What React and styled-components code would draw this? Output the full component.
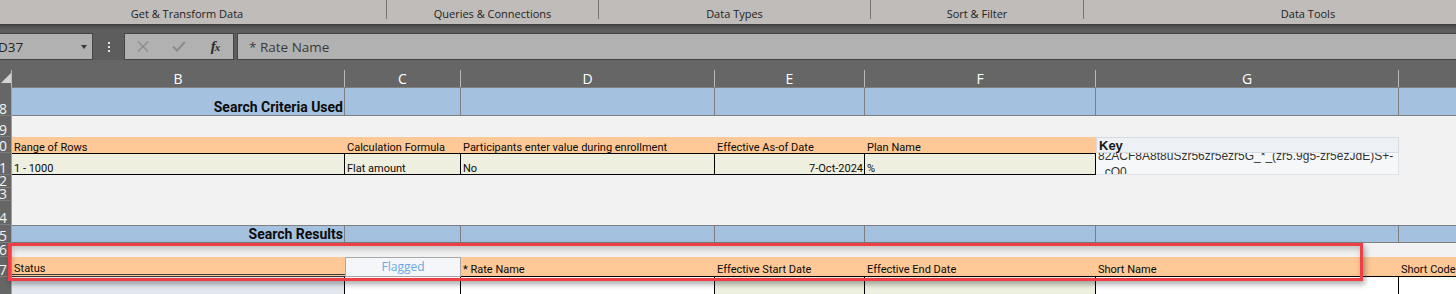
import React from 'react';
import styled, { createGlobalStyle } from 'styled-components';

const COLS = '12px 333px 116px 254px 150px 231px 303px 400px';
const UI = `"Open Sans", "Noto Sans", sans-serif`;
const CELL = `Roboto, "Liberation Sans", sans-serif`;
const ARIAL = `"Liberation Sans", Arial, sans-serif`;

const GlobalStyle = createGlobalStyle`
  html, body { margin: 0; padding: 0; background: #f2f2f2; overflow: hidden; }
  body { font-family: ${CELL}; }
  * { box-sizing: border-box; }
`;

const Window = styled.div`
  width: 1456px;
  height: 294px;
  overflow: hidden;
  display: flex;
  flex-direction: column;
`;

/* ---------- Ribbon ---------- */
const Ribbon = styled.div`
  flex: 0 0 24px;
  background: #c0bcb9;
  display: flex;
  align-items: flex-start;
  overflow: hidden;
`;
const RibbonGroup = styled.div`
  flex: 0 0 ${p => p.$w}px;
  height: 24px;
  padding: 6px ${p => p.$pr || 0}px 0 0;
  text-align: center;
  font: 11px/16px ${UI};
  color: #222;
  white-space: nowrap;
`;
const RibbonDivider = styled.div`
  flex: 0 0 1px;
  height: 19px;
  background: #77736f;
`;

/* ---------- Formula bar ---------- */
const FormulaArea = styled.div`
  flex: 0 0 auto;
  padding-top: 9px;
  background: linear-gradient(#3c3c3c, #535353 3px, #5d5d5d 6px);
`;
const FormulaBar = styled.div`
  height: 27px;
  display: flex;
`;
const NameBox = styled.div`
  flex: 0 0 93px;
  border: 1px solid #454545;
  border-left: none;
  background: #b1b1b1;
  display: flex;
  align-items: center;
  justify-content: space-between;
  padding-right: 5px;
  font: 13.5px ${UI};
  color: #262626;
`;
const NameText = styled.span`
  margin-left: -2px;
`;
const Caret = styled.span`
  width: 0;
  height: 0;
  border-left: 3px solid transparent;
  border-right: 3px solid transparent;
  border-top: 4px solid #383838;
`;
const DotsSlot = styled.div`
  flex: 0 0 31px;
  display: flex;
  flex-direction: column;
  align-items: center;
  justify-content: center;
  gap: 2px;
`;
const Dot = styled.span`
  width: 2px;
  height: 2px;
  background: #e2e2e2;
`;
const ButtonBox = styled.div`
  flex: 0 0 110px;
  border: 1px solid #454545;
  background: #b1b1b1;
  display: flex;
  align-items: center;
`;
const IconSlot = styled.div`
  flex: 0 0 36px;
  display: flex;
  align-items: center;
  justify-content: center;
`;
const Fx = styled.span`
  font: italic bold 15px "Liberation Serif", serif;
  color: #2b2b2b;
  letter-spacing: -1px;
  small { font-size: 11px; }
`;
const FormulaInput = styled.div`
  flex: 1;
  margin-left: 3px;
  border: 1px solid #454545;
  border-right: none;
  background: #b1b1b1;
  display: flex;
  align-items: center;
  padding-left: 11px;
  font: 13.5px ${UI};
  color: #3a3a3a;
`;

/* ---------- Column header ---------- */
const HeaderBlock = styled.div`
  flex: 0 0 auto;
  background: #666666;
  padding-top: 10px;
`;
const HeaderRow = styled.div`
  display: grid;
  grid-template-columns: ${COLS};
  height: 17px;
`;
const CornerCell = styled.div`
  border-right: 1px solid #b8b8b8;
  display: flex;
  align-items: flex-end;
  justify-content: flex-end;
  padding: 0 0 4px 0;
`;
const ColHead = styled.div`
  border-right: 1px solid #b8b8b8;
  color: #ffffff;
  font: 14px/17px ${UI};
  text-align: center;
  overflow: hidden;
`;

/* ---------- Sheet ---------- */
const Sheet = styled.div`
  flex: 1;
  position: relative;
  background: #f2f2f2;
`;
const Row = styled.div`
  display: grid;
  grid-template-columns: ${COLS};
  height: ${p => p.$h}px;
`;
const RowHead = styled.div`
  background: #666666;
  color: #f4f4f4;
  border-right: 1px solid #a0a0a0;
  border-bottom: 1px solid #7c7c7c;
  display: flex;
  justify-content: flex-end;
  align-items: flex-end;
  padding: 0 4px 1px 0;
  overflow: hidden;
  white-space: nowrap;
  font: 14px/11px ${UI};
`;
const Blank = styled.div``;

const BandCell = styled.div`
  background: #a4c2df;
  border-top: 1px solid #7f7f7f;
  border-bottom: 1px solid #7f7f7f;
  border-right: 1px solid #7f7f7f;
  display: flex;
  align-items: flex-end;
  justify-content: flex-end;
  padding: 0 1px 1px 0;
  font: bold 14px/14px ${CELL};
  color: #0c0c0c;
  white-space: nowrap;
`;

const LabelCell = styled.div`
  background: #fec996;
  display: flex;
  align-items: flex-end;
  padding: 0 2px ${p => (p.$ruled ? 1 : 0)}px 2px;
  border-bottom: ${p => (p.$double ? '3px double #3a3a3a' : p.$ruled ? '1px solid #000' : 'none')};
  font: 11px/11px ${CELL};
  color: #0a0a0a;
  white-space: nowrap;
  overflow: hidden;
`;

const ValueCell = styled.div`
  background: ${p => p.$bg};
  border-top: ${p => (p.$open ? 'none' : '1px solid #000')};
  border-bottom: ${p => (p.$open ? 'none' : '1px solid #000')};
  border-right: 1px solid #000;
  display: flex;
  align-items: flex-end;
  justify-content: ${p => (p.$right ? 'flex-end' : 'flex-start')};
  padding: 0 1px 0 2px;
  font: 11px/11px ${CELL};
  color: #0a0a0a;
  white-space: nowrap;
  overflow: hidden;
`;

const KeyHead = styled.div`
  background: #edf0f5;
  border: 1px solid #d6dbe3;
  display: flex;
  align-items: flex-end;
  padding-left: 2px;
  font: bold 13px/13px ${ARIAL};
  color: #151515;
`;
const KeyValue = styled.div`
  background: #f6f7f9;
  border-right: 1px solid #dfe3e8;
  border-bottom: 1px solid #dfe3e8;
  display: flex;
  flex-direction: column;
  justify-content: center;
  padding-left: 2px;
  overflow: hidden;
  font: 12px/16px ${ARIAL};
  color: #333;
  white-space: nowrap;
`;

const FlagCell = styled.div`
  background: #f4f6f9;
  border: 1px solid #a9a9a9;
  display: flex;
  align-items: center;
  justify-content: center;
  font: 12px/16px ${UI};
  color: #6aa8ea;
`;

const RedBox = styled.div`
  position: absolute;
  left: 8px;
  top: 156px;
  width: 1355px;
  height: 38px;
  border: 3px solid #ee3e46;
  box-shadow: 2px 3px 6px rgba(0, 0, 0, 0.35), inset 1px 3px 6px rgba(0, 0, 0, 0.22);
  pointer-events: none;
`;

const ribbonGroups = [
  { w: 386, pr: 12, label: 'Get & Transform Data' },
  { w: 211, label: 'Queries & Connections' },
  { w: 271, label: 'Data Types' },
  { w: 212, label: 'Sort & Filter' },
  { w: 448, label: 'Data Tools' },
];

const letters = ['B', 'C', 'D', 'E', 'F', 'G', ''];

const criteriaLabels = [
  'Range of Rows',
  'Calculation Formula',
  'Participants enter value during enrollment',
  'Effective As-of Date',
  'Plan Name',
];

const criteriaValues = [
  { t: '1 - 1000' },
  { t: 'Flat amount' },
  { t: 'No' },
  { t: '7-Oct-2024', right: true },
  { t: '%' },
];

const resultLabels = ['* Rate Name', 'Effective Start Date', 'Effective End Date', 'Short Name', 'Short Code'];

const lastRowBgs = ['#e3e8ef', '#ffffff', '#ffffff', '#edefdf', '#edefdf', '#ffffff', '#ffffff'];

function Band({ n, h, title }) {
  return (
    <Row $h={h}>
      <RowHead>{n}</RowHead>
      <BandCell>{title}</BandCell>
      {letters.slice(1).map((l, i) => (
        <BandCell key={i} />
      ))}
    </Row>
  );
}

function EmptyRow({ n, h }) {
  return (
    <Row $h={h}>
      <RowHead>{n}</RowHead>
    </Row>
  );
}

export default function App() {
  return (
    <Window>
      <GlobalStyle />
      <Ribbon>
        {ribbonGroups.map((g, i) => (
          <React.Fragment key={g.label}>
            <RibbonGroup $w={g.w} $pr={g.pr}>{g.label}</RibbonGroup>
            {i < ribbonGroups.length - 1 && <RibbonDivider />}
          </React.Fragment>
        ))}
      </Ribbon>

      <FormulaArea>
        <FormulaBar>
          <NameBox>
            <NameText>D37</NameText>
            <Caret />
          </NameBox>
          <DotsSlot>
            <Dot />
            <Dot />
            <Dot />
          </DotsSlot>
          <ButtonBox>
            <IconSlot>
              <svg width="12" height="11" viewBox="0 0 12 11">
                <path d="M1 0.5 L11 10.5 M11 0.5 L1 10.5" stroke="#8c8c8c" strokeWidth="1.4" fill="none" />
              </svg>
            </IconSlot>
            <IconSlot>
              <svg width="14" height="11" viewBox="0 0 14 11">
                <path d="M1 5.5 L5 9.5 L13 1" stroke="#8c8c8c" strokeWidth="2" fill="none" />
              </svg>
            </IconSlot>
            <IconSlot>
              <Fx>
                f<small>x</small>
              </Fx>
            </IconSlot>
          </ButtonBox>
          <FormulaInput>* Rate Name</FormulaInput>
        </FormulaBar>
      </FormulaArea>

      <HeaderBlock>
        <HeaderRow>
          <CornerCell>
            <svg width="10" height="10" viewBox="0 0 10 10">
              <path d="M10 0 L10 10 L0 10 Z" fill="#d4d4d4" />
            </svg>
          </CornerCell>
          {letters.map((l, i) => (
            <ColHead key={i}>{l}</ColHead>
          ))}
        </HeaderRow>
      </HeaderBlock>

      <Sheet>
        <Band n="8" h={29} title="Search Criteria Used" />
        <EmptyRow n="9" h={21} />

        <Row $h={16}>
          <RowHead>0</RowHead>
          {criteriaLabels.map(t => (
            <LabelCell key={t}>{t}</LabelCell>
          ))}
          <KeyHead>Key</KeyHead>
          <Blank />
        </Row>

        <Row $h={22}>
          <RowHead>1</RowHead>
          {criteriaValues.map(v => (
            <ValueCell key={v.t} $bg="#efefdf" $right={v.right}>
              {v.t}
            </ValueCell>
          ))}
          <KeyValue>
            <span>82ACF8A8t8uSzr56zr5ezr5G_*_(zr5.9g5-zr5ezJdE)S+-</span>
            <span>_cO0</span>
          </KeyValue>
          <Blank />
        </Row>

        <EmptyRow n="2" h={13} />
        <EmptyRow n="3" h={13} />
        <EmptyRow n="4" h={24} />
        <Band n="5" h={18} title="Search Results" />
        <EmptyRow n="6" h={14} />

        <Row $h={20}>
          <RowHead>7</RowHead>
          <LabelCell $double>Status</LabelCell>
          <FlagCell>Flagged</FlagCell>
          {resultLabels.map(t => (
            <LabelCell key={t} $ruled>
              {t}
            </LabelCell>
          ))}
        </Row>

        <Row $h={30}>
          <RowHead />
          {lastRowBgs.map((bg, i) => (
            <ValueCell key={i} $bg={bg} $open />
          ))}
        </Row>

        <RedBox />
      </Sheet>
    </Window>
  );
}
